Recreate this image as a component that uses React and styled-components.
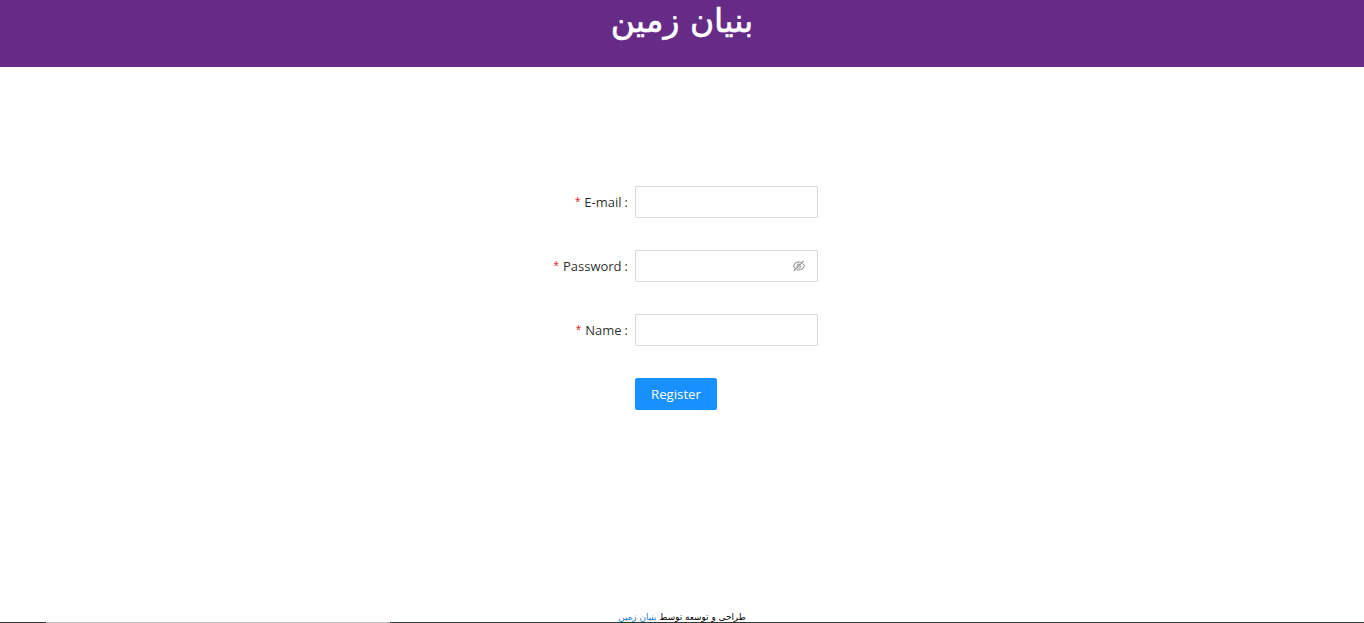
import styled, { createGlobalStyle } from "styled-components";
import { AiOutlineEyeInvisible } from "react-icons/ai";

const GlobalStyle = createGlobalStyle`
  * {
    box-sizing: border-box;
  }
  html, body {
    margin: 0;
    padding: 0;
    background: #fff;
    font-family: "Open Sans", "Noto Sans", "DejaVu Sans", sans-serif;
  }
`;

const Page = styled.div`
  height: 100vh;
  display: flex;
  flex-direction: column;
  overflow: hidden;
`;

const Header = styled.header`
  height: 67px;
  flex: none;
  background: #662a87;
  text-align: center;
`;

const Title = styled.h1`
  margin: 0;
  color: #fff;
  font-family: "DejaVu Sans", sans-serif;
  font-size: 33px;
  font-weight: 400;
  line-height: 42px;
  -webkit-text-stroke: 0.6px #fff;
`;

const Main = styled.main`
  flex: 1;
  display: flex;
  justify-content: center;
  padding: 119px 94px 0 0;
`;

const Form = styled.form`
  width: 366px;
  display: flex;
  flex-direction: column;
  gap: 32px;
`;

const Row = styled.div`
  display: grid;
  grid-template-columns: 183px 183px;
  height: 32px;
  align-items: center;
`;

const Label = styled.label`
  padding-right: 7px;
  text-align: right;
  font-size: 13px;
  color: rgba(0, 0, 0, 0.85);
  white-space: nowrap;
`;

const Star = styled.span`
  margin-right: 4px;
  color: #e2303a;
  font-family: "Liberation Sans", sans-serif;
  font-size: 14px;
`;

const Colon = styled.span`
  margin-left: 3px;
`;

const InputBox = styled.div`
  height: 32px;
  display: flex;
  align-items: center;
  justify-content: flex-end;
  padding: 0 11px;
  background: #fff;
  border: 1px solid #d9d9d9;
  border-radius: 2px;
  color: rgba(0, 0, 0, 0.45);
  font-size: 14px;
`;

const TextInput = styled.input`
  flex: 1;
  min-width: 0;
  height: 100%;
  padding: 0;
  border: 0;
  outline: 0;
  background: transparent;
`;

const Submit = styled.button`
  grid-column: 2;
  width: 82px;
  height: 32px;
  padding: 0;
  color: #fff;
  background: #1890ff;
  border: 1px solid #1890ff;
  border-radius: 2px;
  font-family: inherit;
  font-size: 13.2px;
`;

const Footer = styled.footer`
  flex: none;
  height: 11px;
  position: relative;
  text-align: center;
  direction: rtl;
  font-family: "DejaVu Sans", sans-serif;
  font-size: 8.9px;
  line-height: 11px;
  color: #000;
  white-space: nowrap;
`;

const FooterLink = styled.a`
  color: #1478d0;
  text-decoration: none;
`;

// thin strip along the bottom edge of the window
const EdgeLine = styled.div`
  position: absolute;
  left: 0;
  right: 0;
  bottom: 0;
  height: 1px;
  background: linear-gradient(
    to right,
    #333 0 46px,
    #bbb 46px 390px,
    #2c3a38 390px 100%
  );
`;

const FooterText = styled.span`
  position: relative;
  z-index: 1;
`;

const fields = [
  { id: "email", label: "E-mail" },
  { id: "password", label: "Password", secret: true },
  { id: "name", label: "Name" },
];

export default function App() {
  return (
    <Page>
      <GlobalStyle />
      <Header>
        <Title dir="rtl">بنیان زمین</Title>
      </Header>
      <Main>
        <Form onSubmit={(e) => e.preventDefault()}>
          {fields.map((f) => (
            <Row key={f.id}>
              <Label htmlFor={f.id}>
                <Star>*</Star>
                {f.label}
                <Colon>:</Colon>
              </Label>
              <InputBox>
                <TextInput id={f.id} type={f.secret ? "password" : "text"} />
                {f.secret && <AiOutlineEyeInvisible size={14} />}
              </InputBox>
            </Row>
          ))}
          <Row>
            <Submit type="submit">Register</Submit>
          </Row>
        </Form>
      </Main>
      <Footer>
        <EdgeLine />
        <FooterText>
          طراحی و توسعه توسط <FooterLink href="#">بنیان زمین</FooterLink>
        </FooterText>
      </Footer>
    </Page>
  );
}
